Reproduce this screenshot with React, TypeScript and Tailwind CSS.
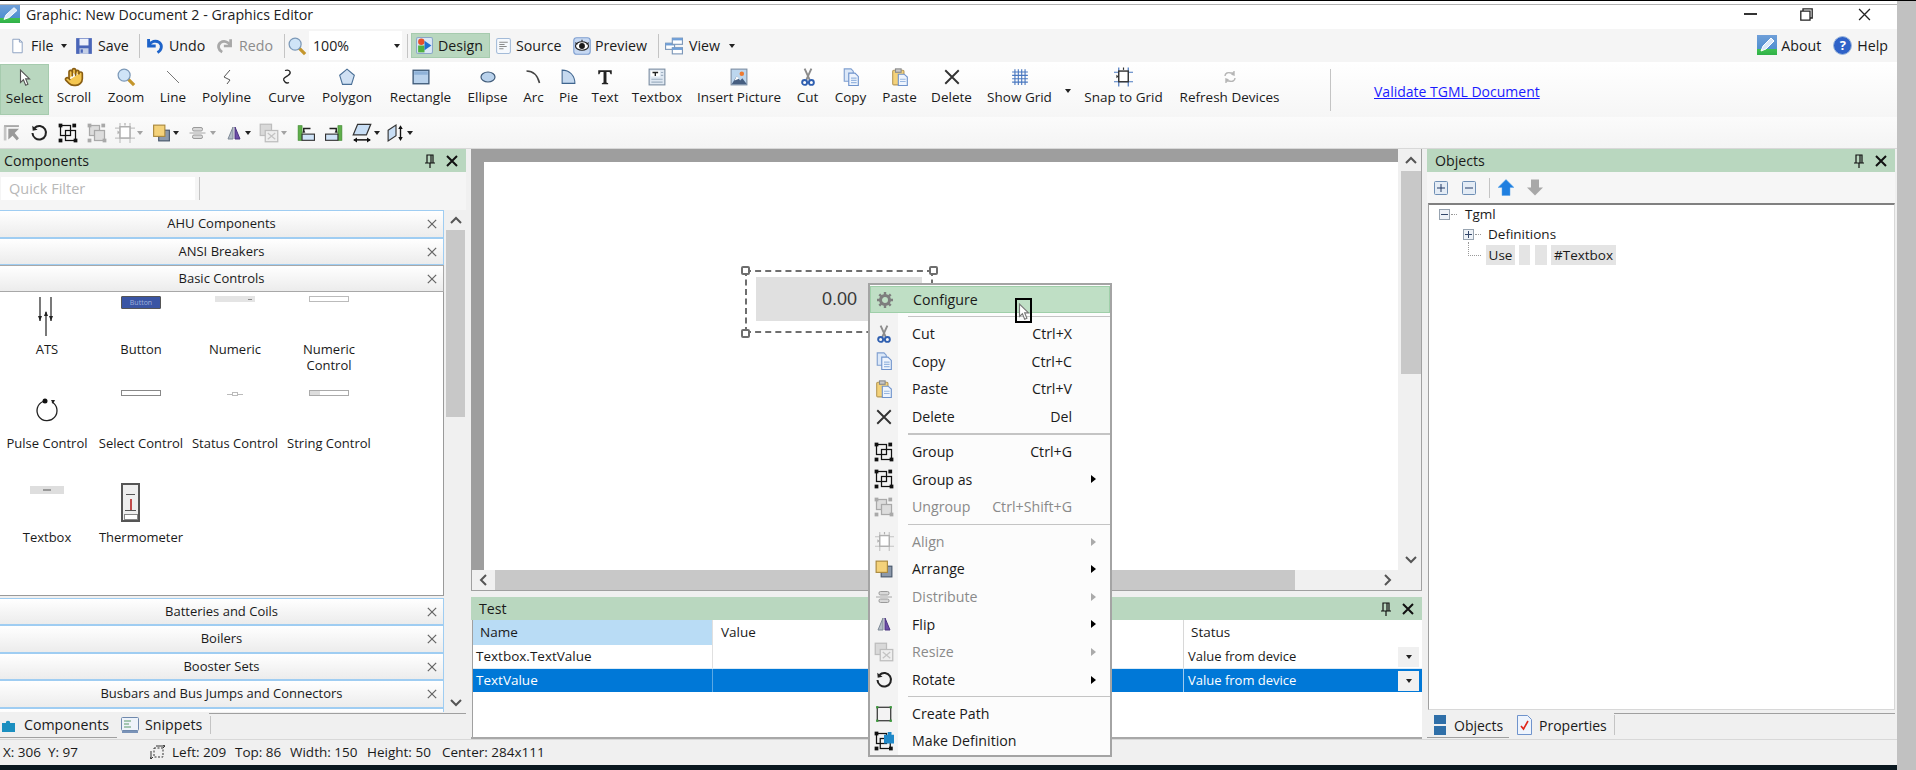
import React from "react";
import { Hand } from "lucide-react";

type P = { c?: string };
const S = ({ c = "w-4 h-4", children }: { c?: string; children: React.ReactNode }) => (
  <svg viewBox="0 0 16 16" className={`${c} shrink-0`} fill="none">{children}</svg>
);

const Logo = ({ c, id }: P & { id: string }) => (
  <svg viewBox="0 0 20 20" preserveAspectRatio="none" className={`${c} shrink-0`}>
    <defs><linearGradient id={id} x1="0" y1="0" x2="0" y2="1"><stop offset="0" stopColor="#6f9fd8" /><stop offset="0.7" stopColor="#4f8fd0" /><stop offset="0.72" stopColor="#3fc050" /><stop offset="1" stopColor="#2fb048" /></linearGradient></defs>
    <rect width="20" height="20" fill={`url(#${id})`} />
    <path d="M4 16l2-5 8-8 3 3-8 8z" fill="#dbe9f8" stroke="#fff" />
  </svg>
);
const NewDoc = ({ c }: P) => <S c={c}><path d="M3 .8h7l3 3v11.4H3z" fill="#fff" stroke="#8a9fc0" /><path d="M10 .8v3h3" stroke="#8a9fc0" /></S>;
const Save = ({ c }: P) => <S c={c}><rect x="1" y="1" width="14" height="14" fill="#4a66b8" /><rect x="4" y="1.5" width="8" height="6" fill="#eef2fa" /><rect x="4" y="10" width="8" height="5" fill="#c4cfe6" /><rect x="5" y="11" width="2" height="3" fill="#4a66b8" /></S>;
const Undo = ({ c, col = "#1d63c9" }: P & { col?: string }) => <S c={c}><path d="M3 2v6h6" stroke={col} strokeWidth="2.4" /><path d="M3.5 7.5C5 4 9 3 12 5c3 2.5 2 6.5-1.5 8.5" stroke={col} strokeWidth="2.4" /></S>;
const Redo = ({ c }: P) => <S c={c}><g transform="translate(16 0) scale(-1 1)"><path d="M3 2v6h6" stroke="#a8a8a8" strokeWidth="2.4" /><path d="M3.5 7.5C5 4 9 3 12 5c3 2.5 2 6.5-1.5 8.5" stroke="#a8a8a8" strokeWidth="2.4" /></g></S>;
const Lens = ({ c }: P) => <S c={c}><line x1="9.5" y1="9.5" x2="14.5" y2="14.5" stroke="#c4962c" strokeWidth="2.6" /><circle cx="6.5" cy="6.5" r="4.8" fill="#cfe4f7" stroke="#7c99b8" /></S>;
const Design = ({ c }: P) => <S c={c}><rect x=".5" y=".5" width="15" height="15" rx="1.5" fill="#dbe8f6" stroke="#8ba7c8" /><circle cx="5" cy="4.5" r="3" fill="#e5502a" /><rect x="2" y="8" width="6" height="6.5" fill="#4fb040" /><path d="M8 3.5l6.500 4.500L8 12.500z" fill="#1f6fd0" /></S>;
const Source = ({ c }: P) => <S c={c}><rect x="1.5" y="1" width="13" height="14" rx="1.5" fill="#f6f9fd" stroke="#a3bbd8" /><path d="M4 4.500h8M4 6.500h5M4 8.500h7M4 10.500h4" stroke="#8a8a8a" /></S>;
const Preview = ({ c }: P) => <S c={c}><rect x=".7" y=".7" width="14.6" height="14.6" rx="2.5" fill="#c6d8f2" stroke="#7f9fd0" /><ellipse cx="8" cy="8" rx="5.800" ry="3.800" fill="#fff" stroke="#222" /><circle cx="8" cy="8" r="2.600" fill="#1a1a1a" /><path d="M2 5l2 1.500M14 5l-2 1.500M8 2.500v1.500" stroke="#222" /></S>;
const ViewI = ({ c }: P) => <S c={c}><rect x=".5" y="5.500" width="8" height="5.500" fill="#fff" stroke="#7c97b8" /><rect x=".5" y="5.500" width="8" height="2" fill="#6f9fd8" /><rect x="6.500" y="1" width="9" height="5.500" fill="#fff" stroke="#7c97b8" /><rect x="6.500" y="1" width="9" height="2" fill="#6f9fd8" /><rect x="6.500" y="9.500" width="9" height="5.500" fill="#fff" stroke="#7c97b8" /><rect x="6.500" y="9.500" width="9" height="2" fill="#6f9fd8" /></S>;
const Pointer = ({ c, col = "#555", fill = "#fff" }: P & { col?: string; fill?: string }) => <S c={c}><path d="M4 1v11l2.600-2.400 2 4.800 2-.9-2-4.700H12z" fill={fill} stroke={col} /></S>;
const LineI = ({ c }: P) => <S c={c}><path d="M2 2l12 12" stroke="#777" /></S>;
const Poly = ({ c }: P) => <S c={c}><path d="M11 1L5 8l6 3-3 4" stroke="#555" /></S>;
const Curve = ({ c }: P) => <S c={c}><path d="M6 1.500C11 0 13 4 9 6.500S3 10 6 13c1.500 1.500 3 1 4 .5" stroke="#222" strokeWidth="1.300" /></S>;
const Pentagon = ({ c }: P) => <S c={c}><path d="M8 1l6.500 5.500L12 14.500H4L1.500 6.500z" fill="#cfe0f3" stroke="#4a6f96" /></S>;
const RectI = ({ c }: P) => <S c={c}><rect x="1" y="2" width="14" height="12" fill="#b9d2ec" stroke="#3f5a78" strokeWidth="1.200" /><rect x="2" y="3" width="12" height="3" fill="#8fb2d8" /></S>;
const Ell = ({ c }: P) => <S c={c}><ellipse cx="8" cy="8" rx="7" ry="5" fill="#b9d2ec" stroke="#3f5a78" strokeWidth="1.200" /></S>;
const Arc = ({ c }: P) => <S c={c}><path d="M1 2c6 0 11 4 13 12" stroke="#444" strokeWidth="1.600" /></S>;
const Pie = ({ c }: P) => <S c={c}><path d="M2 1.500c7 0 12 5 12 12.500H2z" fill="#c5d9ef" stroke="#3f658e" /></S>;
const Tee = ({ c }: P) => <S c={c}><path d="M2 2h12v3.500h-1L12 3.500H9.300v9.300l1.500.7V14.500H5.200v-1l1.500-.7V3.500H4L3 5.500H2z" fill="#222" /></S>;
const TextboxI = ({ c }: P) => <S c={c}><rect x="1" y="1" width="14" height="14" fill="#dfe8f2" stroke="#7e8fa4" /><rect x="2.500" y="2.500" width="8" height="5" fill="#fff" /><path d="M4 4h5M6.500 4v3" stroke="#222" strokeWidth="1.200" /><path d="M3 10h10M3 12.500h10M11.500 4h2M11.500 6.500h2" stroke="#9fb0c2" /></S>;
const Pic = ({ c }: P) => <S c={c}><rect x="1" y="1" width="14" height="14" fill="#bcd6ee" stroke="#7e8fa4" /><circle cx="10.500" cy="5" r="2" fill="#ee7a30" /><path d="M1.500 14.500L6 7l3 4 2-2 4 5.500z" fill="#465e80" /><path d="M4 11l2-4 2 2.500z" fill="#fff" /></S>;
const Cut = ({ c }: P) => <S c={c}><path d="M5 .5l4.500 10M11 .5L6.500 10.500" stroke="#8c8c8c" strokeWidth="1.700" /><circle cx="5" cy="12.800" r="2.200" stroke="#2f5fb0" strokeWidth="1.700" /><circle cx="11" cy="12.800" r="2.200" stroke="#2f5fb0" strokeWidth="1.700" /></S>;
const Copy = ({ c }: P) => <S c={c}><path d="M2 .8h6l2 2v9H2z" fill="#dce8f8" stroke="#7f9fd0" /><path d="M6 4.500h5.500L14.500 7.500v8H6z" fill="#eef4fd" stroke="#6f93cc" /><path d="M8 9h5M8 11h5M8 13h5" stroke="#98b6e0" /></S>;
const Paste = ({ c }: P) => <S c={c}><rect x="1.500" y="2" width="10" height="13" rx="1" fill="#f4d27a" stroke="#b89a58" /><rect x="4" y=".8" width="5" height="3" fill="#c9c9c9" stroke="#8a8a8a" /><path d="M6.500 5.500h5.200L14.500 8v7.500h-8z" fill="#eef4fd" stroke="#6f93cc" /><path d="M8 10h5M8 12h5" stroke="#98b6e0" /></S>;
const XI = ({ c }: P) => <S c={c}><path d="M2 2l12 12M14 2L2 14" stroke="#333" strokeWidth="1.700" /></S>;
const GridI = ({ c }: P) => <S c={c}><path d="M1 3.500h14M1 6.500h14M1 9.500h14M1 12.500h14M3.500 1v14M6.500 1v14M9.500 1v14M12.500 1v14" stroke="#4a78c0" /></S>;
const Snap = ({ c, col = "#4a78c0", d = "#333" }: P & { col?: string; d?: string }) => <S c={c}><path d="M4 0v16M12 0v16M0 4h16M0 12h16" stroke={col} /><rect x="4" y="3" width="8" height="9" fill="#fff" stroke={d} strokeWidth="1.200" /><path d="M2 6l2 1.500L2 9z" fill={d} /><path d="M8 0v2" stroke={d} /></S>;
const Refresh = ({ c }: P) => <S c={c}><path d="M3 7c0-3 3-4 6-3h3M12 2v4l-2.500-1M13 9c0 3-3 4-6 3H4M4 14v-4l2.500 1" stroke="#b5b5b5" strokeWidth="1.400" /></S>;
const Group = ({ c, g = false }: P & { g?: boolean }) => { const k = g ? "#a9a9a9" : "#111"; return <S c={c}><rect x="2" y="2" width="8" height="8" stroke={k} fill={g ? "#ddd" : "none"} /><rect x="6" y="6" width="8" height="8" stroke={k} fill={g ? "#ddd" : "none"} /><rect x=".5" y=".5" width="3" height="3" fill={k} /><rect x="11.500" y=".5" width="3" height="3" fill={k} /><rect x=".5" y="12.500" width="3" height="3" fill={k} /><rect x="12.500" y="12.500" width="3" height="3" fill={k} /></S>; };
const Arrange = ({ c }: P) => <S c={c}><rect x="5.500" y="5.500" width="9.500" height="9.500" fill="#8c99ab" stroke="#47566a" /><rect x="1" y="1" width="10" height="10" fill="#f4d27a" stroke="#a8873c" /></S>;
const Dist = ({ c }: P) => <S c={c}><rect x="3" y="2.500" width="10" height="3.500" rx="1.500" fill="#d8d8d8" stroke="#9a9a9a" /><rect x="3" y="10" width="10" height="3.500" rx="1.500" fill="#d8d8d8" stroke="#9a9a9a" /><path d="M0 8h16" stroke="#a8a8a8" /></S>;
const Flip = ({ c }: P) => <S c={c}><path d="M7 2L2 14h5z" fill="#b4bdc8" stroke="#7e8996" /><path d="M9 2l5 12H9z" fill="#6e4fa8" stroke="#4a3480" /></S>;
const Resize = ({ c }: P) => <S c={c}><rect x="1" y="1" width="9" height="9" fill="#d9d9d9" stroke="#bdbdbd" /><rect x="5" y="6" width="10" height="9" fill="#eee" stroke="#bdbdbd" /><path d="M7 8l6 5M13 8l-6 5" stroke="#c4c4c4" /></S>;
const Rotate = ({ c }: P) => <S c={c}><path d="M4 3.500A6 6 0 1 1 2.200 8" stroke="#222" strokeWidth="1.800" /><path d="M2 1.500l.4 4.500 4.300-.9z" fill="#222" /></S>;
const Path = ({ c }: P) => <S c={c}><rect x="2" y="2" width="12" height="12" stroke="#222" /><rect x="1" y="1" width="2" height="2" fill="#3a9a3a" /><rect x="13" y="1" width="2" height="2" fill="#3a9a3a" /><rect x="1" y="13" width="2" height="2" fill="#3a9a3a" /><rect x="13" y="13" width="2" height="2" fill="#3a9a3a" /></S>;
const MakeDef = ({ c }: P) => <S c={c}><rect x="2" y="2" width="8" height="8" stroke="#111" /><rect x="5" y="6" width="8" height="8" stroke="#111" /><rect x=".5" y=".5" width="3" height="3" fill="#111" /><rect x=".5" y="12.500" width="3" height="3" fill="#111" /><rect x="12" y="12.500" width="3" height="3" fill="#111" /><path d="M8 3h3V.8h3V3h2v7H8z" fill="#1e88c8" /></S>;
const PtrSmall = ({ c }: P) => <S c={c}><path d="M1 1.500h14" stroke="#a8a8a8" strokeWidth="1.800" /><path d="M2 2v13" stroke="#c4c4c4" strokeWidth="2.500" /><path d="M5 4h10L11 8l4 5-2 2-4-4.500L5 14z" fill="#9a9a9a" /></S>;
const AlignL = ({ c }: P) => <S c={c}><rect x="1" y="1.500" width="3.500" height="13" fill="#5fae4a" stroke="#3f8a30" strokeWidth=".6" /><rect x="4.500" y="9" width="11" height="5.500" fill="#cfe3f7" stroke="#333" /><path d="M6 7.500V4h6" stroke="#222" strokeWidth="1.300" /><path d="M7.500 7.500L6 5.500 4.500 7.500z" fill="#222" /></S>;
const AlignR = ({ c }: P) => <S c={c}><g transform="translate(16 0) scale(-1 1)"><rect x="1" y="1.500" width="3.500" height="13" fill="#5fae4a" stroke="#3f8a30" strokeWidth=".6" /><rect x="4.500" y="9" width="11" height="5.500" fill="#cfe3f7" stroke="#333" /><path d="M6 7.500V4h6" stroke="#222" strokeWidth="1.300" /><path d="M7.500 7.500L6 5.500 4.500 7.500z" fill="#222" /></g></S>;
const Skew = ({ c }: P) => <S c={c}><path d="M4.500 1h10.500L11.500 9.500H1z" fill="#c8def5" stroke="#333" /><path d="M1.500 13.500h13" stroke="#111" strokeWidth="1.200" /><path d="M4 11.500L1 13.500l3 2zM12 11.500l3 2-3 2z" fill="#111" /></S>;
const Skew2 = ({ c }: P) => <S c={c}><path d="M1 5.500l7-4.500v9.500L1 15z" fill="#c8def5" stroke="#333" /><path d="M12 2.500v11" stroke="#111" strokeWidth="1.200" /><path d="M10 4.500L12 1l2 3.500zM10 11.500l2 3.500 2-3.500z" fill="#111" /></S>;
const Pin = () => <svg viewBox="0 0 10 14" className="w-[10px] h-[14px]"><path d="M2 1h6v8H2zM6 1v8M0 9h10M5 9v5" stroke="#111" strokeWidth="1.200" fill="none" /></svg>;
const Xs = ({ c = "w-[12px] h-[12px]", col = "#111", w = 2 }: P & { col?: string; w?: number }) => <svg viewBox="0 0 12 12" className={c}><path d="M1 1l10 10M11 1L1 11" stroke={col} strokeWidth={w} /></svg>;
const Drop = ({ c = "" }: P) => <span className={`inline-block shrink-0 w-0 h-0 border-l-[3.5px] border-r-[3.5px] border-t-[4px] border-l-transparent border-r-transparent border-t-[#222] ${c}`} />;
const Chev = ({ d }: { d: "u" | "d" | "l" | "r" }) => {
  const p = { u: "M1 7l5-5 5 5", d: "M1 2l5 5 5-5", l: "M7 1L2 6l5 5", r: "M2 1l5 5-5 5" }[d];
  const sz = d === "u" || d === "d" ? "w-[12px] h-[9px]" : "w-[9px] h-[12px]";
  const vb = d === "u" || d === "d" ? "0 0 12 9" : "0 0 9 12";
  return <svg viewBox={vb} className={sz}><path d={p} fill="none" stroke="#555" strokeWidth="2" /></svg>;
};
const Sep = ({ c = "h-[24px]" }: P) => <span className={`block w-[1px] bg-[#c4c4c4] shrink-0 ${c}`} />;

const Header = ({ title, pl = "pl-[8px]" }: { title: string; pl?: string }) => (
  <div className="h-[23px] bg-[#b9d7bf] flex items-center shrink-0 text-[14.2px]">
    <span className={`${pl} text-[#1a1a1a]`}>{title}</span>
    <span className="ml-auto mr-[8px] flex items-center gap-[11px]"><Pin /><Xs /></span>
  </div>
);

const tools: [string, string, React.ReactNode][] = [
  ["Select", "w-[49px]", <Pointer c="w-[18px] h-[20px]" />],
  ["Scroll", "w-[50px]", <Hand className="w-[20px] h-[20px]" fill="#f4c650" stroke="#8a5e12" />],
  ["Zoom", "w-[54px]", <Lens c="w-[20px] h-[20px]" />],
  ["Line", "w-[40px]", <LineI c="w-[16px] h-[16px]" />],
  ["Polyline", "w-[67px]", <Poly c="w-[16px] h-[18px]" />],
  ["Curve", "w-[53px]", <Curve c="w-[16px] h-[20px]" />],
  ["Polygon", "w-[68px]", <Pentagon c="w-[20px] h-[18px]" />],
  ["Rectangle", "w-[79px]", <RectI c="w-[20px] h-[18px]" />],
  ["Ellipse", "w-[55px]", <Ell c="w-[20px] h-[16px]" />],
  ["Arc", "w-[37px]", <Arc c="w-[17px] h-[16px]" />],
  ["Pie", "w-[33px]", <Pie c="w-[17px] h-[18px]" />],
  ["Text", "w-[40px]", <Tee c="w-[18px] h-[18px]" />],
  ["Textbox", "w-[64px]", <TextboxI c="w-[18px] h-[18px]" />],
  ["Insert Picture", "w-[100px]", <Pic c="w-[18px] h-[20px]" />],
  ["Cut", "w-[37px]", <Cut c="w-[18px] h-[20px]" />],
  ["Copy", "w-[49px]", <Copy c="w-[18px] h-[20px]" />],
  ["Paste", "w-[49px]", <Paste c="w-[18px] h-[20px]" />],
  ["Delete", "w-[55px]", <XI c="w-[18px] h-[18px]" />],
  ["Show Grid", "w-[81px]", <GridI c="w-[18px] h-[18px]" />],
];
const tools2: [string, string, React.ReactNode][] = [
  ["Snap to Grid", "w-[95px]", <Snap c="w-[19px] h-[20px]" />],
  ["Refresh Devices", "w-[117px]", <Refresh c="w-[16px] h-[18px]" />],
];
const Tool = ({ t, active }: { t: [string, string, React.ReactNode]; active?: boolean }) => (
  <div className={`${t[1]} h-[51px] flex flex-col items-center shrink-0 ${active ? "bg-[#b9d7bf] border border-[#a6cbae]" : ""}`}>
    <div className="h-[25px] flex items-center justify-center">{t[2]}</div>
    <span className="leading-[16px] whitespace-nowrap">{t[0]}</span>
  </div>
);

const cells: [React.ReactNode, React.ReactNode][] = [
  [<svg viewBox="0 0 24 40" className="w-[24px] h-[40px]"><path d="M5 1v24M16 1v24M11 16v24" stroke="#222" strokeWidth="1.200" /><path d="M3 20l2 5 2-5zM14 20l2 5 2-5zM9 20l2 -5 2 5z" fill="#222" /></svg>, "ATS"],
  [<div className="w-[40px] h-[13px] bg-[#3a55a4] border border-[#555] rounded-[1px] flex items-center justify-center text-[7px] leading-none text-[#9fb0dc]">Button</div>, "Button"],
  [<div className="w-[40px] h-[6px] bg-[#e4e4e4] flex items-center justify-end pr-[3px]"><span className="w-[4px] h-[1px] bg-[#888]" /></div>, "Numeric"],
  [<div className="w-[40px] h-[6px] bg-white border border-[#bbb]" />, <>Numeric<br />Control</>],
  [<svg viewBox="0 0 24 24" className="w-[24px] h-[24px] mt-[8px]"><path d="M8 3.500a10 10 0 1 0 9 .5" stroke="#222" strokeWidth="1.300" fill="none" /><circle cx="10" cy="3" r="2.500" fill="#111" /><path d="M20 2l-4 0 2 4z" fill="#222" /></svg>, "Pulse Control"],
  [<div className="w-[40px] h-[6px] bg-white border border-[#888]" />, "Select Control"],
  [<div className="flex items-center mt-[2px] h-[4px]"><span className="w-[5px] h-[1px] bg-[#bbb]" /><span className="w-[6px] h-[4px] border border-[#bbb]" /><span className="w-[5px] h-[1px] bg-[#bbb]" /></div>, "Status Control"],
  [<div className="w-[40px] h-[6px] bg-white border border-[#aaa]"><div className="w-[10px] h-full bg-[#ddd]" /></div>, "String Control"],
  [<div className="w-[34px] h-[8px] bg-[#dedede] mt-[2px] flex items-center justify-center"><span className="w-[8px] h-[2px] bg-[#999]" /></div>, "Textbox"],
  [<div className="w-[40px]"><div className="w-[19px] h-[39px] -mt-[1px] bg-[#eee] border-2 border-[#555] flex flex-col items-center justify-end"><span className="w-[9px] h-[1px] bg-[#555] mb-[4px]" /><span className="w-[2px] h-[11px] bg-[#c04a4a]" /><span className="w-[11px] h-[1px] bg-[#555] mb-[3px]" /><span className="w-[14px] h-[6px] bg-white border border-[#888]" /></div></div>, "Thermometer"],
];

const Acc = ({ t, h, blue = true }: { t: string; h: string; blue?: boolean }) => (
  <div className={`${h} shrink-0 flex items-center justify-center relative border-t border-r border-b bg-[linear-gradient(#ffffff,#ececec)] text-[13px] ${blue ? "border-[#9fcdf2]" : "border-[#a8a8a8]"}`}>
    <span className="text-[#1a1a1a]">{t}</span>
    <span className="absolute right-[6px] top-[8px]"><Xs c="w-[10px] h-[10px]" col="#666" w={1.500} /></span>
  </div>
);

const menu: ({ sep: string } | { l: string; s?: string; i?: React.ReactNode; d?: boolean; a?: boolean })[] = [
  { sep: "h-[7px]" },
  { l: "Cut", s: "Ctrl+X", i: <Cut c="w-[18px] h-[20px]" /> },
  { l: "Copy", s: "Ctrl+C", i: <Copy c="w-[18px] h-[20px]" /> },
  { l: "Paste", s: "Ctrl+V", i: <Paste c="w-[18px] h-[20px]" /> },
  { l: "Delete", s: "Del", i: <XI c="w-[18px] h-[18px]" /> },
  { sep: "h-[7.6px]" },
  { l: "Group", s: "Ctrl+G", i: <Group c="w-[20px] h-[20px]" /> },
  { l: "Group as", a: true, i: <Group c="w-[20px] h-[20px]" /> },
  { l: "Ungroup", s: "Ctrl+Shift+G", d: true, i: <Group c="w-[20px] h-[20px]" g /> },
  { sep: "h-[7px]" },
  { l: "Align", d: true, a: true, i: <Snap c="w-[19px] h-[19px]" col="#c4c4c4" d="#b0b0b0" /> },
  { l: "Arrange", a: true, i: <Arrange c="w-[18px] h-[18px]" /> },
  { l: "Distribute", d: true, a: true, i: <Dist c="w-[18px] h-[16px]" /> },
  { l: "Flip", a: true, i: <Flip c="w-[18px] h-[16px]" /> },
  { l: "Resize", d: true, a: true, i: <Resize c="w-[20px] h-[20px]" /> },
  { l: "Rotate", a: true, i: <Rotate c="w-[18px] h-[18px]" /> },
  { sep: "h-[6.4px]" },
  { l: "Create Path", i: <Path c="w-[18px] h-[18px]" /> },
  { l: "Make Definition", i: <MakeDef c="w-[20px] h-[20px]" /> },
];

const Handle = ({ c }: P) => <span className={`absolute w-[9px] h-[9px] bg-white border-2 border-[#6e6e6e] rounded-[2px] ${c}`} />;

export default function App() {
  return (
    <div className="relative w-[1916px] h-[770px] overflow-hidden flex flex-col bg-black font-['Open_Sans',sans-serif] text-[13.5px] text-[#1a1a1a]">
      <div className="h-[1px] bg-black shrink-0" />
      <div className="flex flex-1 min-h-0">
        <div className="w-[1897px] flex flex-col">
          <div className="h-[3px] bg-white shrink-0" />
          <div className="h-[1px] bg-[#b4b4b4] shrink-0" />
          {/* title */}
          <div className="h-[24px] bg-white flex items-start shrink-0">
            <Logo c="w-[20px] h-[18px]" id="a" />
            <span className="ml-[6px] leading-[20px] text-[14.2px] text-[#222]">Graphic: New Document 2 - Graphics Editor</span>
            <span className="ml-auto flex items-center mr-[26px] h-[18px]">
              <span className="w-[13px] h-[1.500px] bg-[#333]" />
              <svg viewBox="0 0 13 13" className="w-[13px] h-[13px] ml-[43px]"><path d="M3 3V.8h9.200V10H10M.8 3.200H10v9H.8z" fill="none" stroke="#222" strokeWidth="1.300" /></svg>
              <span className="ml-[45px]"><Xs c="w-[13px] h-[13px]" col="#222" w={1.200} /></span>
            </span>
          </div>
          {/* toolbar 1 */}
          <div className="h-[33px] bg-[#f5f5f5] flex items-center shrink-0 pl-[10px] text-[14.2px]">
            <NewDoc c="w-[15px] h-[20px]" />
            <span className="ml-[6px] w-[30px]">File</span><Drop />
            <Save c="ml-[8px] w-[18px] h-[20px]" />
            <span className="ml-[5px] w-[32px]">Save</span>
            <span className="ml-[9px]"><Sep /></span>
            <Undo c="ml-[5px] w-[19px] h-[20px]" />
            <span className="ml-[5px] w-[42px]">Undo</span>
            <Redo c="ml-[5px] w-[18px] h-[20px]" />
            <span className="ml-[5px] w-[40px] text-[#8c8c8c]">Redo</span>
            <span className="ml-[5px]"><Sep /></span>
            <Lens c="ml-[2px] w-[20px] h-[20px]" />
            <div className="ml-[2px] w-[93px] h-[29px] bg-white flex items-center pl-[4px]">
              <span className="w-[81px]">100%</span><Drop />
            </div>
            <span className="ml-[5px]"><Sep /></span>
            <div className="ml-[3px] w-[79px] h-[25px] bg-[#b9d7bf] border border-[#a6cbae] flex items-center pl-[4px]">
              <Design c="w-[17px] h-[19px]" /><span className="ml-[5px]">Design</span>
            </div>
            <Source c="ml-[5px] w-[17px] h-[18px]" />
            <span className="ml-[4px] w-[57px]">Source</span>
            <Preview c="w-[18px] h-[18px]" />
            <span className="ml-[4px] w-[63px]">Preview</span>
            <Sep />
            <ViewI c="ml-[5px] w-[20px] h-[18px]" />
            <span className="ml-[5px] w-[40px]">View</span><Drop />
            <span className="ml-auto flex items-center mr-[9px]">
              <Logo c="w-[20px] h-[20px]" id="b" />
              <span className="ml-[4px] w-[52px]">About</span>
              <span className="w-[19px] h-[19px] rounded-full bg-[#2f62c8] border border-[#9db8dc] text-white font-bold text-[13px] leading-none flex items-center justify-center">?</span>
              <span className="ml-[5px]">Help</span>
            </span>
          </div>
          {/* toolbar 2 */}
          <div className="h-[55px] bg-[linear-gradient(#ffffff,#f6f6f6)] flex items-start pt-[2px] shrink-0">
            <Tool t={tools[0]} active />
            {tools.slice(1).map((t) => <Tool key={t[0]} t={t} />)}
            <div className="w-[16px] h-[51px] flex justify-center pt-[25px] shrink-0"><Drop /></div>
            {tools2.map((t) => <Tool key={t[0]} t={t} />)}
            <span className="ml-[42px] mt-[5px]"><Sep c="h-[42px]" /></span>
            <a className="ml-[43px] mt-[18px] text-[#1a1aff] underline text-[14px] leading-[20px] whitespace-nowrap">Validate TGML Document</a>
          </div>
          {/* toolbar 3 */}
          <div className="h-[32px] bg-[linear-gradient(#fbfbfb,#f4f4f4)] border-b border-[#d8d8d8] flex items-center pl-[3px] shrink-0">
            <PtrSmall c="w-[17px] h-[18px]" />
            <Rotate c="ml-[10px] w-[18px] h-[18px]" />
            <Group c="ml-[10px] w-[20px] h-[20px]" />
            <Group c="ml-[9px] w-[20px] h-[20px]" g />
            <Snap c="ml-[8px] w-[20px] h-[20px]" col="#c4c4c4" d="#b0b0b0" /><Drop c="ml-[2px] opacity-40" />
            <Arrange c="ml-[9px] w-[19px] h-[18px]" /><Drop c="ml-[2px]" />
            <Dist c="ml-[8px] w-[21px] h-[16px]" /><Drop c="ml-[2px] opacity-40" />
            <Flip c="ml-[9px] w-[18px] h-[16px]" /><Drop c="ml-[2px]" />
            <Resize c="ml-[8px] w-[20px] h-[20px]" /><Drop c="ml-[2px] opacity-40" />
            <AlignL c="ml-[9px] w-[20px] h-[18px]" />
            <AlignR c="ml-[9px] w-[18px] h-[18px]" />
            <Skew c="ml-[9px] w-[20px] h-[20px]" /><Drop c="ml-[2px]" />
            <Skew2 c="ml-[7px] w-[18px] h-[20px]" /><Drop c="ml-[2px]" />
          </div>

          {/* main */}
          <div className="h-[590px] flex bg-[#f0f0f0] shrink-0">
            {/* left */}
            <div className="w-[466px] mr-[5px] flex flex-col shrink-0">
              <Header title="Components" pl="pl-[4px]" />
              <div className="h-[38px] flex items-start pt-[5px] pl-[1px] bg-[#f5f5f5]">
                <div className="w-[194px] h-[23px] bg-white flex items-center pl-[8px] text-[14.5px] text-[#b8b8b8]">Quick Filter</div>
                <span className="ml-[4px]"><Sep c="h-[23px]" /></span>
              </div>
              <div className="h-[502px] flex">
                <div className="w-[444px] h-full overflow-hidden flex flex-col">
                  <Acc t="AHU Components" h="h-[28px]" />
                  <Acc t="ANSI Breakers" h="h-[27px]" />
                  <Acc t="Basic Controls" h="h-[27px]" blue={false} />
                  <div className="h-[304px] shrink-0 bg-white border-r border-b border-[#9a9a9a] pt-[4px] grid grid-cols-[repeat(4,94px)] auto-rows-[94px] text-[13px]">
                    {cells.map((cell, i) => (
                      <div key={i} className="flex flex-col items-center">
                        <div className="h-[45px] flex flex-col items-center justify-start">{cell[0]}</div>
                        <div className="leading-[16px] text-center whitespace-nowrap">{cell[1]}</div>
                      </div>
                    ))}
                  </div>
                  <div className="h-[2px] shrink-0" />
                  <Acc t="Batteries and Coils" h="h-[27px]" />
                  <Acc t="Boilers" h="h-[28px]" />
                  <Acc t="Booster Sets" h="h-[27px]" />
                  <Acc t="Busbars and Bus Jumps and Connectors" h="h-[28px]" />
                  <Acc t="" h="h-[27px]" />
                </div>
                <div className="ml-[2px] w-[19px] h-full flex flex-col items-center">
                  <div className="h-[20px] flex items-center justify-center"><Chev d="u" /></div>
                  <div className="w-[19px] h-[187px] bg-[#c8c8c8]" />
                  <div className="flex-1" />
                  <div className="h-[20px] flex items-center justify-center"><Chev d="d" /></div>
                </div>
              </div>
              <div className="h-[26px] flex items-center relative text-[14.2px]">
                <svg viewBox="0 0 14 14" className="ml-[2px] w-[14px] h-[16px]"><path d="M0 5h4c-1-3 5-3 4 0h5v9H0z" fill="#1b8fc0" /></svg>
                <span className="ml-[8px] w-[97px]">Components</span>
                <svg viewBox="0 0 18 16" className="w-[18px] h-[16px]"><rect x=".5" y=".5" width="17" height="13" rx="1" fill="#eef3fa" stroke="#6f89ad" /><path d="M3 4h7M3 7h5M3 10h7" stroke="#5a9a6a" /><path d="M1 15h16" stroke="#7a93b8" strokeWidth="2" /></svg>
                <span className="ml-[6px] w-[65px]">Snippets</span>
                <Sep c="h-[18px]" />
                <span className="absolute left-[209px] right-0 top-[1px] h-[1px] bg-[#a0a0a0]" />
                <span className="absolute left-0 w-[117px] bottom-0 h-[1px] bg-[#a0a0a0]" />
              </div>
            </div>

            {/* center */}
            <div className="w-[951px] mr-[5px] flex flex-col shrink-0">
              <div className="h-[421px] flex shrink-0">
                <div className="w-[927px] bg-[#9e9e9e] pt-[13px] pl-[13px]">
                  <div className="relative w-full h-full bg-white">
                    <div className="absolute left-[261px] top-[108px] w-[188px] h-[63px] border-2 border-dashed border-[#6e6e6e]" />
                    <div className="absolute left-[272px] top-[115px] w-[166px] h-[44px] bg-[#e0e0e0] flex items-center justify-end pr-[65px] text-[18px] font-['Liberation_Sans',sans-serif] text-[#3a3a3a]">0.00</div>
                    <Handle c="left-[257px] top-[104px]" />
                    <Handle c="left-[445px] top-[104px]" />
                    <Handle c="left-[257px] top-[167px]" />
                  </div>
                </div>
                <div className="w-[24px] border-r border-[#a0a0a0] flex flex-col items-center pl-[2px]">
                  <div className="h-[22px] flex items-center justify-center"><Chev d="u" /></div>
                  <div className="w-[20px] h-[203px] bg-[#c8c8c8]" />
                  <div className="flex-1" />
                  <div className="h-[22px] flex items-center justify-center"><Chev d="d" /></div>
                </div>
              </div>
              <div className="h-[21px] flex items-center border border-t-0 border-[#a0a0a0] shrink-0">
                <div className="w-[23px] flex justify-center"><Chev d="l" /></div>
                <div className="w-[800px] h-full bg-[#c8c8c8]" />
                <div className="flex-1 flex justify-end pr-[29px]"><Chev d="r" /></div>
              </div>
              <div className="h-[6px] shrink-0" />
              <div className="flex-1 flex flex-col min-h-0 border-b-2 border-[#a8a8a8]">
                <Header title="Test" />
                <div className="flex-1 bg-white border-l border-[#a0a0a0] ml-[1px]">
                  <div className="h-[25px] flex items-center">
                    <div className="w-[239px] h-full bg-[#b9dcf5] flex items-center pl-[7px]">Name</div>
                    <div className="w-[471px] h-full border-l border-[#e0e0e0] flex items-center pl-[8px]">Value</div>
                    <div className="h-full border-l border-[#d8d8d8] flex items-center pl-[7px]">Status</div>
                  </div>
                  <div className="h-[24px] flex items-center border-b border-[#dceaf5]">
                    <div className="w-[239px] pl-[3px]">Textbox.TextValue</div>
                    <div className="w-[471px] h-full border-l border-[#e0e0e0]" />
                    <div className="flex-1 h-full border-l border-[#d8d8d8] flex items-center pl-[4px] text-[13px]">Value from device
                      <span className="ml-auto mr-[3px] w-[21px] h-[20px] bg-[#f0f0f0] flex items-center justify-center"><Drop /></span>
                    </div>
                  </div>
                  <div className="h-[23px] flex items-center bg-[#0078d7] text-white">
                    <div className="w-[239px] pl-[3px]">TextValue</div>
                    <div className="w-[471px] h-full border-l border-[#5ba8e4]" />
                    <div className="flex-1 h-full border-l border-[#9fcbee] flex items-center pl-[4px] text-[13px]">Value from device
                      <span className="ml-auto mr-[3px] w-[21px] h-[20px] bg-[#f0f0f0] flex items-center justify-center"><Drop /></span>
                    </div>
                  </div>
                </div>
              </div>
            </div>

            {/* right */}
            <div className="w-[470px] flex flex-col shrink-0">
              <div className="mr-[2px] flex flex-col flex-1 min-h-0">
                <Header title="Objects" />
                <div className="h-[31px] bg-[#f6f6f6] flex items-center pl-[7px] shrink-0">
                  {["M3 7h8M7 3v8", "M3 7h8"].map((d, i) => (
                    <svg key={d} viewBox="0 0 14 14" className={`w-[14px] h-[14px] ${i ? "ml-[14px]" : ""}`}><rect x=".5" y=".5" width="13" height="13" rx="1" fill="#e4ecf5" stroke="#6f8fb5" /><path d={d} stroke="#223a66" /></svg>
                  ))}
                  <span className="ml-[13px]"><Sep c="h-[20px]" /></span>
                  <svg viewBox="0 0 16 16" className="ml-[8px] w-[16px] h-[17px]"><path d="M8 0l8 8h-4v8H4V8H0z" fill="#1f7fe0" stroke="#5aa5ea" strokeWidth=".5" /></svg>
                  <svg viewBox="0 0 16 16" className="ml-[13px] w-[16px] h-[17px]"><path d="M8 16L0 8h4V0h8v8h4z" fill="#a8a8a8" /></svg>
                </div>
                <div className="relative h-[507px] bg-white border-t-2 border-l border-r border-t-[#808080] border-l-[#a0a0a0] border-r-[#d8d8d8] border-b border-b-[#d8d8d8] ml-[1px] shrink-0">
                  <div className="h-[20px] -mt-[1px] flex items-center pl-[10px]">
                    <svg viewBox="0 0 11 11" className="w-[11px] h-[11px]"><rect x=".5" y=".5" width="10" height="10" fill="#eef2f7" stroke="#97a3b0" /><path d="M2 5.500h7" stroke="#33476a" /></svg>
                    <span className="ml-[1px] w-[6px] border-t border-dotted border-[#999]" />
                    <span className="ml-[8px]">Tgml</span>
                  </div>
                  <div className="h-[20px] flex items-center pl-[34px]">
                    <svg viewBox="0 0 11 11" className="w-[11px] h-[11px]"><rect x=".5" y=".5" width="10" height="10" fill="#eef2f7" stroke="#97a3b0" /><path d="M2 5.500h7M5.500 2v7" stroke="#33476a" /></svg>
                    <span className="ml-[1px] w-[6px] border-t border-dotted border-[#999]" />
                    <span className="ml-[7px]">Definitions</span>
                  </div>
                  <div className="h-[20px] flex items-center pl-[57px] mt-[1px]">
                    <span className="w-[29px] h-[20px] bg-[#e4e4e4] flex items-center justify-center">Use</span>
                    <span className="ml-[4px] w-[11px] h-[20px] bg-[#e4e4e4]" />
                    <span className="ml-[5px] w-[12px] h-[20px] bg-[#e4e4e4]" />
                    <span className="ml-[4px] w-[65px] h-[20px] bg-[#e4e4e4] flex items-center justify-center">#Textbox</span>
                  </div>
                  <span className="absolute left-[39px] top-[37px] h-[14px] border-l border-dotted border-[#999]" />
                  <span className="absolute left-[39px] top-[50px] w-[13px] border-t border-dotted border-[#999]" />
                </div>
                <div className="h-[2px] shrink-0" />
                <div className="h-[26px] flex items-center relative text-[14px]">
                  <svg viewBox="0 0 12 20" className="ml-[7px] w-[12px] h-[20px]"><rect width="12" height="9" fill="#2f6fa8" /><rect y="11" width="12" height="9" fill="#2f6fa8" /></svg>
                  <span className="ml-[8px] w-[63px]">Objects</span>
                  <svg viewBox="0 0 15 20" className="w-[15px] h-[20px]"><path d="M.5.500h10l4 4v15H.500z" fill="#eef4fd" stroke="#6f93cc" /><path d="M4 11l2.500 3L11 6" stroke="#e0261c" strokeWidth="1.600" fill="none" /></svg>
                  <span className="ml-[7px] w-[75px]">Properties</span>
                  <Sep c="h-[20px]" />
                  <span className="absolute left-[187px] right-0 top-[1px] h-[1px] bg-[#a0a0a0]" />
                  <span className="absolute left-0 w-[82px] bottom-0 h-[1px] bg-[#a0a0a0]" />
                </div>
              </div>
            </div>
          </div>

          {/* status */}
          <div className="h-[26px] bg-[#f0f0f0] border-t border-[#d8d8d8] flex items-center shrink-0 pl-[3px]">
            <span className="w-[45px]">X: 306</span>
            <span className="w-[102px]">Y: 97</span>
            <svg viewBox="0 0 16 16" className="w-[16px] h-[16px]"><rect x="4" y="3" width="9" height="9" fill="none" stroke="#333" strokeDasharray="2 1.500" /><path d="M1 6v8M1 14l-1-2M1 14l2-2M6 1h9M15 1l-2-1M15 1l-2 2" stroke="#333" /></svg>
            <span className="ml-[6px] w-[63px]">Left: 209</span>
            <span className="w-[55px]">Top: 86</span>
            <span className="w-[77px]">Width: 150</span>
            <span className="w-[75px]">Height: 50</span>
            <span>Center: 284x111</span>
          </div>
          <div className="flex-1 bg-[#0b1820]" />
        </div>
        <div className="flex-1 bg-[#c1c1c1]" />
      </div>

      {/* context menu */}
      <div className="absolute left-[868px] top-[283px] w-[244px] h-[474px] bg-[#fcfcfc] border-2 border-[#a4a4a4] flex flex-col text-[14.2px]">
        <div className="h-[1px] shrink-0" />
        <div className="h-[27px] shrink-0 bg-[#bfdfc5] border border-[#9fcfa9] flex items-center">
          <span className="w-[27px] flex justify-center">
            <svg viewBox="0 0 16 16" className="w-[16px] h-[16px]"><circle cx="8" cy="8" r="4.500" fill="none" stroke="#7e7e7e" strokeWidth="3" /><path d="M8 0v3M8 13v3M0 8h3M13 8h3M2.300 2.300l2 2M11.700 11.700l2 2M13.700 2.300l-2 2M4.300 11.700l-2 2" stroke="#7e7e7e" strokeWidth="2.400" /></svg>
          </span>
          <span className="ml-[15px]">Configure</span>
        </div>
        {menu.map((m, i) =>
          "sep" in m ? (
            <div key={i} className={`${m.sep} flex shrink-0`}>
              <span className="w-[28px] bg-[#f3f3f3]" />
              <span className="flex-1 ml-[10px] self-center h-[1.500px] bg-[#c4c4c4]" />
            </div>
          ) : (
            <div key={i} className={`h-[27.6px] flex items-center shrink-0 ${m.d ? "text-[#8a8a8a]" : ""}`}>
              <span className="w-[28px] h-full bg-[#f3f3f3] flex items-center justify-center">{m.i}</span>
              <span className="ml-[14px]">{m.l}</span>
              {m.s && <span className="ml-auto mr-[38px]">{m.s}</span>}
              {m.a && <span className={`ml-auto mr-[14px] w-0 h-0 border-y-[4.500px] border-l-[5px] border-y-transparent ${m.d ? "border-l-[#aaa]" : "border-l-black"}`} />}
            </div>
          )
        )}
      </div>
      {/* cursor */}
      <div className="absolute left-[1015px] top-[298px] w-[17px] h-[25px] border-2 border-black flex justify-center overflow-hidden">
        <Pointer c="w-[18px] h-[24px]" col="#777" fill="#fff" />
      </div>
    </div>
  );
}
